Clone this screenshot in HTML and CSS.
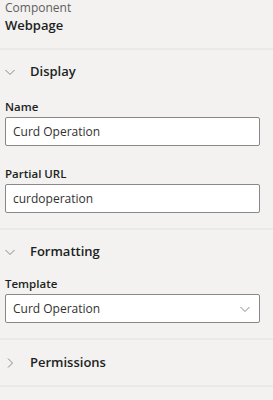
FILE: index.html
```html
<!DOCTYPE html>
<html lang="en">
<head>
  <meta charset="UTF-8">
  <meta name="viewport" content="width=device-width, initial-scale=1.0">
  <title>Properties</title>
  <link rel="stylesheet" href="styles.css">
</head>
<body>
  <div class="panel">
    <div class="component">
      <div class="component-type">Component</div>
      <div class="component-name">Webpage</div>
    </div>

    <div class="section">
      <div class="section-head">
        <svg class="chevron" width="10" height="10" viewBox="0 0 10 10"><path d="M0.5 3 L5 7.5 L9.5 3" fill="none" stroke="#8a8886" stroke-width="1"/></svg>
        <span>Display</span>
      </div>
      <div class="fields">
        <div class="field">
          <label>Name</label>
          <div class="input">Curd Operation</div>
        </div>
        <div class="field">
          <label>Partial URL</label>
          <div class="input">curdoperation</div>
        </div>
      </div>
    </div>

    <div class="section">
      <div class="section-head">
        <svg class="chevron" width="10" height="10" viewBox="0 0 10 10"><path d="M0.5 3 L5 7.5 L9.5 3" fill="none" stroke="#8a8886" stroke-width="1"/></svg>
        <span>Formatting</span>
      </div>
      <div class="fields tight">
        <div class="field">
          <label>Template</label>
          <div class="input select">
            <span>Curd Operation</span>
            <svg width="10" height="10" viewBox="0 0 10 10"><path d="M0.5 3 L5 7.5 L9.5 3" fill="none" stroke="#8a8886" stroke-width="1"/></svg>
          </div>
        </div>
      </div>
    </div>

    <div class="section collapsed">
      <div class="section-head">
        <svg class="chevron" width="10" height="10" viewBox="0 0 10 10"><path d="M3 0.5 L7.5 5 L3 9.5" fill="none" stroke="#8a8886" stroke-width="1"/></svg>
        <span>Permissions</span>
      </div>
    </div>
  </div>
</body>
</html>
```

FILE: styles.css
```css
body {
  margin: 0;
  background-color: #f3f2f1;
  font-family: "Open Sans", "Noto Sans", sans-serif;
  color: #201f1e;
}

.panel {
  width: 273px;
}

.component {
  padding: 0 5px 14px;
  border-bottom: 2px solid #ebe9e7;
}

.component-type {
  font-size: 12px;
  line-height: 16px;
  color: #605e5c;
}

.component-name {
  font-size: 13px;
  font-weight: 600;
  line-height: 18px;
}

.section {
  padding: 0 13px 15px 5px;
  border-bottom: 2px solid #ebe9e7;
}

.section.collapsed {
  padding-bottom: 0;
}

.section-head {
  display: flex;
  align-items: center;
  gap: 15px;
  height: 41px;
  font-size: 13px;
  font-weight: 600;
  line-height: 18px;
}

.collapsed .section-head {
  height: 43px;
  padding-bottom: 2px;
}

.chevron {
  flex-shrink: 0;
  margin-top: 2px;
}

.fields {
  display: flex;
  flex-direction: column;
  gap: 20px;
  padding-top: 8px;
}

.fields.tight {
  padding-top: 5px;
}

.field {
  display: flex;
  flex-direction: column;
  gap: 2px;
}

.field label {
  font-size: 11.5px;
  font-weight: 600;
  line-height: 16px;
}

.input {
  box-sizing: border-box;
  height: 29px;
  border: 1px solid #8a8886;
  border-radius: 2px;
  background-color: #fff;
  padding: 0 9px 0 7px;
  font-size: 12px;
  line-height: 27px;
  color: #323130;
}

.select {
  display: flex;
  justify-content: space-between;
  align-items: center;
}
```
